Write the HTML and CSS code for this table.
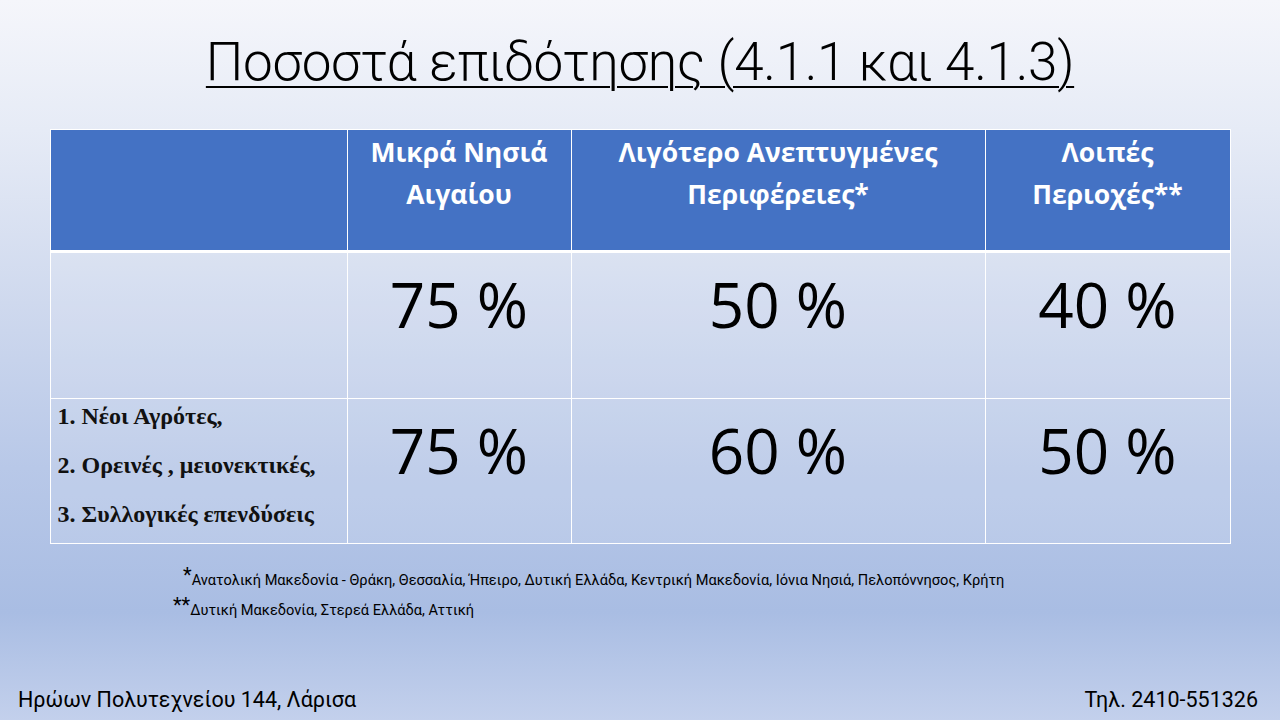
FILE: index.html
```html
<!DOCTYPE html>
<html lang="el">
<head>
<meta charset="utf-8">
<title>Ποσοστά επιδότησης</title>
<link rel="stylesheet" href="styles.css">
</head>
<body>
<div class="slide">
  <h1 class="title">Ποσοστά επιδότησης (4.1.1 και 4.1.3)</h1>
  <table class="rates">
    <colgroup>
      <col class="c1"><col class="c2"><col class="c3"><col class="c4">
    </colgroup>
    <thead>
      <tr>
        <th></th>
        <th>Μικρά Νησιά<br>Αιγαίου</th>
        <th>Λιγότερο Ανεπτυγμένες<br>Περιφέρειες*</th>
        <th>Λοιπές<br>Περιοχές**</th>
      </tr>
    </thead>
    <tbody>
      <tr class="r1">
        <td></td>
        <td class="num">75 %</td>
        <td class="num">50 %</td>
        <td class="num">40 %</td>
      </tr>
      <tr class="r2">
        <td class="cats">
          <div class="cat">1. Νέοι Αγρότες,</div>
          <div class="cat">2. Ορεινές , μειονεκτικές,</div>
          <div class="cat">3. Συλλογικές επενδύσεις</div>
        </td>
        <td class="num">75 %</td>
        <td class="num">60 %</td>
        <td class="num">50 %</td>
      </tr>
    </tbody>
  </table>
  <div class="notes">
    <p class="note n1"><span class="ast">*</span>Ανατολική Μακεδονία - Θράκη, Θεσσαλία, Ήπειρο, Δυτική Ελλάδα, Κεντρική Μακεδονία, Ιόνια Νησιά, Πελοπόννησος, Κρήτη</p>
    <p class="note n2"><span class="ast">**</span>Δυτική Μακεδονία, Στερεά Ελλάδα, Αττική</p>
  </div>
  <footer class="footer">
    <span>Ηρώων Πολυτεχνείου 144, Λάρισα</span>
    <span>Τηλ. 2410-551326</span>
  </footer>
</div>
</body>
</html>
```
FILE: styles.css
```css
html, body {
  margin: 0;
  padding: 0;
}
body {
  width: 1280px;
  height: 720px;
  overflow: hidden;
}
.slide {
  width: 1280px;
  height: 720px;
  box-sizing: border-box;
  display: flex;
  flex-direction: column;
  align-items: center;
  background: linear-gradient(to bottom, #f5f6fb 0%, #e6ebf6 18%, #cfd9ee 42%, #b8c8e8 65%, #a9bde3 85%, #c3d0ec 100%);
  font-family: Roboto, "Noto Sans", sans-serif;
  color: #000;
}
.title {
  margin: 30px 0 0;
  height: 99px;
  font-family: Roboto, "Noto Sans", sans-serif;
  font-weight: 300;
  font-size: 53px;
  line-height: 64px;
  letter-spacing: -0.3px;
  text-decoration: underline;
  text-decoration-thickness: 2px;
  text-underline-offset: 6px;
  color: #000;
}
.rates {
  width: 1180px;
  border-collapse: collapse;
  table-layout: fixed;
  font-family: "Open Sans", "Noto Sans", sans-serif;
}
.c1 { width: 297px; }
.c2 { width: 224px; }
.c3 { width: 414px; }
.c4 { width: 245px; }
.rates th, .rates td {
  border: 1px solid #ffffff;
  padding: 0;
  vertical-align: top;
}
.rates th {
  height: 119px;
  background: #4472c4;
  color: #ffffff;
  font-weight: 700;
  font-size: 26.5px;
  line-height: 42px;
  text-align: center;
  padding-top: 1px;
  border-bottom: 3px solid #ffffff;
}
.rates td {
  background: rgba(255, 255, 255, 0.12);
}
.r1 td { height: 136px; }
.r2 td { height: 135px; }
.num {
  font-size: 62px;
  line-height: 84px;
  text-align: center;
  padding-top: 9px !important;
  font-weight: 400;
}
.cats {
  font-family: "Liberation Serif", "Times New Roman", serif;
  font-weight: 700;
  font-size: 24px;
  padding: 0 0 0 7px !important;
  color: #111;
}
.cat {
  line-height: 34px;
  margin-bottom: 15px;
}
.cat:last-child {
  margin-bottom: 0;
}
.notes {
  align-self: stretch;
  padding-top: 21px;
  font-family: Roboto, "Noto Sans", sans-serif;
  font-size: 14.6px;
}
.note {
  margin: 0;
  line-height: 30px;
}
.n1 { padding-left: 183px; }
.n2 { padding-left: 173px; }
.ast {
  font-size: 20px;
  line-height: 0;
  vertical-align: 3px;
}
.footer {
  margin-top: auto;
  align-self: stretch;
  display: flex;
  justify-content: space-between;
  padding: 0 22px 8px 18px;
  font-family: Roboto, "Noto Sans", sans-serif;
  font-size: 21.5px;
  line-height: 24px;
}
```
